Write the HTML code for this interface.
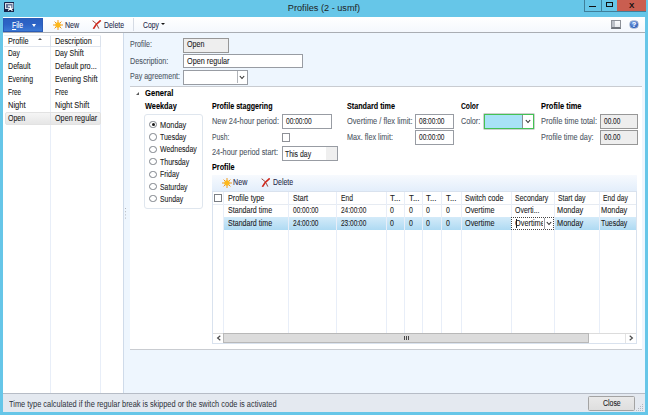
<!DOCTYPE html>
<html><head><meta charset="utf-8"><title>Profiles (2 - usmf)</title>
<style>
html,body{margin:0;padding:0;}
body{width:648px;height:415px;overflow:hidden;background:#66c6e8;font-family:"Liberation Sans",sans-serif;font-size:8.4px;color:#1a1a22;position:relative;}
div,span{box-sizing:border-box;}
.a{position:absolute;}
.t{position:absolute;white-space:nowrap;line-height:10px;height:10px;transform-origin:0 50%;-webkit-text-stroke:0.08px;}
.l{color:#4d5664;}
.tb{color:#1f2a4a;}
.b{font-weight:bold;color:#000;}
.f{position:absolute;background:#fff;border:1px solid #989ca3;}
.ro{background:#eeeeee;border-color:#979797;}
.vl{position:absolute;width:1px;background:#e8eef8;}
.rad{position:absolute;width:7.4px;height:7.4px;border:1px solid #7d8289;border-radius:50%;background:#fff;left:149.4px;}
</style></head><body>
<!-- title bar -->
<svg class="a" style="left:4px;top:2px" width="10.4" height="10.4" viewBox="0 0 10.4 10.4"><rect x="0" y="0" width="10.4" height="10.4" rx="0.8" fill="#16244a"/><rect x="1.5" y="1.6" width="7.4" height="4.8" fill="#5f6f95" stroke="#eef2fa" stroke-width="0.9"/><path d="M4 4.2h2.6v2.2l1.8 2.6M6.4 6.4L4.2 8.6" stroke="#ffffff" stroke-width="1.3" fill="none"/></svg>
<div class="a" style="left:0;width:648px;top:2px;height:11px;line-height:11px;text-align:center;font-size:9.6px;color:#1e1e1e;transform:scaleX(.955);white-space:nowrap;">Profiles (2 - usmf)</div>
<div class="a" style="left:583.5px;top:0;width:62.5px;height:11.6px;border:1px solid #3f7f9a;border-top:none;border-right:none;background:#66c6e8;"></div>
<div class="a" style="left:601px;top:0;width:1px;height:11px;background:#3f7f9a;"></div>
<div class="a" style="left:617.2px;top:0;width:28.8px;height:11.2px;background:#c95e50;"></div>
<div class="a" style="left:589.2px;top:5.6px;width:6.8px;height:1.8px;background:#111;"></div>
<div class="a" style="left:606.4px;top:2.3px;width:7px;height:5.2px;border:1.2px solid #111;border-top-width:1.8px;"></div>
<div class="a" style="left:617.2px;width:28.8px;top:0.5px;height:10px;line-height:10px;text-align:center;font-weight:bold;font-size:8px;color:#111;">X</div>

<!-- toolbar -->
<div class="a" style="left:3px;top:17px;width:642px;height:15px;background:linear-gradient(#ffffff,#f4f8fd);"></div>
<div class="a" style="left:3px;top:32px;width:642px;height:1px;background:#a9adb3;"></div>
<div class="a" style="left:3px;top:18px;width:40px;height:14px;background:linear-gradient(#2a5fc0,#2c63c6 45%,#3c79d6);border:1px solid #2a5cb8;"></div>
<div class="a" style="left:32px;top:24px;width:0;height:0;border-left:2.5px solid transparent;border-right:2.5px solid transparent;border-top:3px solid #fff;"></div>
<svg class="a" style="left:52.6px;top:19.5px" width="10" height="10" viewBox="0 0 10 10"><g stroke="#f09a1c" stroke-width="1"><path d="M5 0v10M0 5h10M1.6 1.6l6.8 6.8M8.4 1.6l-6.8 6.8"/></g><circle cx="5" cy="5" r="2.7" fill="#fdb81a"/></svg>
<svg class="a" style="left:92.4px;top:20px" width="9.2" height="9.2" viewBox="0 0 9.2 9.2"><path d="M0.6 0.8C3.2 2 5.4 5 6.8 8.6" stroke="#8a2a1e" stroke-width="0.9" fill="none"/><path d="M8.8 0.4C6 2.4 3 5.6 1.4 8.8" stroke="#d0281c" stroke-width="1.7" fill="none"/></svg>
<div class="a" style="left:133px;top:18px;width:1px;height:13px;background:#d5dbe4;"></div>
<div class="a" style="left:160.6px;top:23.2px;width:0;height:0;border-left:2.2px solid transparent;border-right:2.2px solid transparent;border-top:2.4px solid #151515;"></div>
<!-- right toolbar icons -->
<div class="a" style="left:611.3px;top:20px;width:10px;height:8.8px;border:1px solid #8d9198;background:linear-gradient(#fafbfc,#e9ebee);border-bottom:2px solid #70747b;"></div>
<div class="a" style="left:612.3px;top:21px;width:2.4px;height:5.8px;background:#bcc0c7;"></div>
<div class="a" style="left:629px;top:19.7px;width:9.8px;height:9.8px;border-radius:50%;background:radial-gradient(circle at 45% 30%,#8db4ee,#2f62be 70%,#274f9e);border:1px solid #a9b9d4;"></div>
<div class="a" style="left:629px;width:9.8px;top:19.7px;height:9.8px;line-height:9.8px;text-align:center;color:#fff;font-weight:bold;font-size:7.4px;">?</div>

<!-- content background -->
<div class="a" style="left:3px;top:33px;width:642px;height:360px;background:#eef6fe;"></div>

<!-- left list -->
<div class="a" style="left:3px;top:33px;width:120.5px;height:360px;background:#fff;border-right:1px solid #cfdbea;"></div>
<div class="a" style="left:4px;top:46px;width:96px;height:1px;background:#e1e6ee;"></div>
<div class="vl" style="left:50px;top:35px;height:358px;"></div>
<div class="vl" style="left:100px;top:35px;height:358px;"></div>
<div class="a" style="left:4.5px;top:112px;width:96px;height:12.6px;background:linear-gradient(#f5f5f5,#e6e6e6);border:1px solid #e2e2e2;border-radius:2px;"></div>
<div class="a" style="left:50px;top:113px;width:1px;height:11px;background:#dfe3ea;"></div>
<div class="a" style="left:38.2px;top:38.4px;width:0;height:0;border-left:2.4px solid transparent;border-right:2.4px solid transparent;border-bottom:2.7px solid #555;"></div>
<div class="a" style="left:50px;top:35.5px;width:1px;height:11px;background:#dbe2ec;"></div>
<div class="a" style="left:100px;top:35.5px;width:1px;height:11px;background:#dbe2ec;"></div>
<div class="a" style="left:4px;top:35px;width:97px;height:1px;background:#eef1f5;"></div>

<!-- header fields -->
<div class="f ro" style="left:183px;top:37.5px;width:46px;height:15px;"></div>
<div class="f" style="left:183px;top:53.7px;width:120px;height:14.5px;"></div>
<div class="f" style="left:183px;top:70px;width:65px;height:14.6px;"></div>
<div class="a" style="left:236.7px;top:71.3px;width:1px;height:12px;background:#b2b5ba;"></div>
<svg class="a" style="left:239px;top:75px" width="6" height="5" viewBox="0 0 6 5"><path d="M0.8 1L3 3.5L5.2 1" stroke="#2e2e2e" stroke-width="1.1" fill="none"/></svg>

<!-- General panel -->
<div class="a" style="left:130px;top:86px;width:512px;height:264px;background:#fff;border-top:1px solid #c9ccd1;border-bottom:1px solid #c9ccd1;"></div>
<div class="a" style="left:136.3px;top:92.4px;width:0;height:0;border-left:3.3px solid transparent;border-bottom:3.3px solid #5a5a5a;"></div>

<!-- weekday group -->
<div class="a" style="left:144px;top:114px;width:59px;height:94.5px;border:1px solid #dfe6ee;border-radius:3px;"></div>
<div class="rad" style="top:121px;"></div><div class="a" style="left:151.5px;top:123.1px;width:3.3px;height:3.3px;border-radius:50%;background:#1a1a1a;"></div>
<div class="rad" style="top:133.2px;"></div>
<div class="rad" style="top:145.6px;"></div>
<div class="rad" style="top:158px;"></div>
<div class="rad" style="top:170.5px;"></div>
<div class="rad" style="top:182.6px;"></div>
<div class="rad" style="top:195px;"></div>

<!-- profile staggering -->
<div class="f" style="left:282px;top:114px;width:49.5px;height:14.5px;"></div>
<div class="a" style="left:282.2px;top:133.1px;width:7.7px;height:8.6px;border:1px solid #8e9197;background:#fff;"></div>
<div class="f" style="left:282.2px;top:145.5px;width:55.8px;height:15.2px;"></div>
<div class="a" style="left:326.3px;top:146.6px;width:10.6px;height:13px;background:#efefef;"></div>

<!-- standard time -->
<div class="f" style="left:415px;top:114px;width:39px;height:14.5px;"></div>
<div class="f" style="left:415px;top:130.2px;width:39px;height:14.6px;"></div>

<!-- color -->
<div class="a" style="left:483.6px;top:114.2px;width:50px;height:14.6px;border:1px solid #44c254;box-shadow:0 0 0 0.45px rgba(110,120,112,.75);background:#a8e2f6;"></div>
<div class="a" style="left:522.4px;top:115.2px;width:10.2px;height:12.6px;background:#fff;border-left:1px solid #8a8e94;"></div>
<svg class="a" style="left:524.8px;top:119.3px" width="6" height="5" viewBox="0 0 6 5"><path d="M0.8 1L3 3.5L5.2 1" stroke="#2e2e2e" stroke-width="1.1" fill="none"/></svg>

<!-- profile time -->
<div class="f ro" style="left:600px;top:114px;width:38px;height:14.5px;"></div>
<div class="f ro" style="left:600px;top:130.2px;width:38px;height:14.6px;"></div>

<!-- Profile grid -->
<div class="a" style="left:212px;top:175px;width:425px;height:16px;background:linear-gradient(#f7fafe,#e3eefb);"></div>
<svg class="a" style="left:221.8px;top:177.8px" width="10" height="10" viewBox="0 0 10 10"><g stroke="#f09a1c" stroke-width="1"><path d="M5 0v10M0 5h10M1.6 1.6l6.8 6.8M8.4 1.6l-6.8 6.8"/></g><circle cx="5" cy="5" r="2.7" fill="#fdb81a"/></svg>
<svg class="a" style="left:261px;top:178px" width="9.2" height="9.2" viewBox="0 0 9.2 9.2"><path d="M0.6 0.8C3.2 2 5.4 5 6.8 8.6" stroke="#8a2a1e" stroke-width="0.9" fill="none"/><path d="M8.8 0.4C6 2.4 3 5.6 1.4 8.8" stroke="#d0281c" stroke-width="1.7" fill="none"/></svg>

<div class="a" style="left:212px;top:191px;width:425px;height:153px;background:#fff;border:1px solid #d9e2ee;"></div>
<div class="a" style="left:213px;top:203.5px;width:423px;height:1px;background:#e6ebf2;"></div>
<div class="a" style="left:223.5px;top:217px;width:412.5px;height:12.5px;background:linear-gradient(#d4ebf9,#aedaf3);"></div>
<div class="vl" style="left:223px;top:192px;height:141px;"></div>
<div class="vl" style="left:288px;top:192px;height:141px;"></div>
<div class="vl" style="left:336px;top:192px;height:141px;"></div>
<div class="vl" style="left:386.2px;top:192px;height:141px;"></div>
<div class="vl" style="left:404px;top:192px;height:141px;"></div>
<div class="vl" style="left:422px;top:192px;height:141px;"></div>
<div class="vl" style="left:441px;top:192px;height:141px;"></div>
<div class="vl" style="left:460.6px;top:192px;height:141px;"></div>
<div class="vl" style="left:510.5px;top:192px;height:141px;"></div>
<div class="vl" style="left:554px;top:192px;height:141px;"></div>
<div class="vl" style="left:599px;top:192px;height:141px;"></div>
<div class="a" style="left:214px;top:194px;width:7.6px;height:7.6px;border:1px solid #7b7f85;background:#fff;"></div>
<!-- active cell -->
<div class="a" style="left:511px;top:217px;width:43px;height:12.5px;background:#fff;border:1px dotted #444;"></div>
<div class="a" style="left:515.6px;top:219px;width:0.8px;height:9px;background:#222;"></div>
<div class="a" style="left:544px;top:218px;width:1px;height:10.5px;background:#9a9ea6;"></div>
<svg class="a" style="left:546px;top:221px" width="6" height="5" viewBox="0 0 6 5"><path d="M0.8 1L3 3.5L5.2 1" stroke="#2e2e2e" stroke-width="1.1" fill="none"/></svg>
<!-- scrollbar -->
<div class="a" style="left:213px;top:333px;width:423px;height:10px;background:#fff;border-top:1px solid #dcdcdc;"></div>
<div class="a" style="left:223.2px;top:333.2px;width:365.4px;height:9.9px;background:#dcdcdc;border:1px solid #b8b8b8;"></div>
<svg class="a" style="left:216px;top:335.3px" width="6" height="6" viewBox="0 0 6 6"><path d="M4.3 0.8L1.6 3L4.3 5.2" stroke="#4a4a4a" stroke-width="1.15" fill="none"/></svg>
<svg class="a" style="left:627.5px;top:335.3px" width="6" height="6" viewBox="0 0 6 6"><path d="M1.7 0.8L4.4 3L1.7 5.2" stroke="#4a4a4a" stroke-width="1.15" fill="none"/></svg>
<div class="a" style="left:625px;top:334px;width:1px;height:9px;background:#e3e3e3;"></div>
<div class="a" style="left:406.2px;top:336.1px;width:1px;height:4.3px;background:#4a4a4a;box-shadow:2px 0 0 #4a4a4a,-2px 0 0 #4a4a4a;"></div>

<!-- splitter grip -->
<div class="a" style="left:124.5px;top:207.8px;width:1.4px;height:1.2px;background:#b3b7be;box-shadow:0 3.2px 0 #b3b7be,0 6.4px 0 #b3b7be,0 9.6px 0 #b3b7be;"></div>

<!-- status bar -->
<div class="a" style="left:3px;top:393px;width:642px;height:19px;background:#e4e9f0;border-top:1px solid #b6bcc6;"></div>
<div class="a" style="left:588.3px;top:396px;width:46.5px;height:14.7px;background:linear-gradient(#e9e9e9,#dedede);border:1px solid #a3a3a3;border-radius:1.5px;"></div>
<div class="a" style="left:642.3px;top:403.5px;width:1.2px;height:1.2px;background:#b4b9c2;box-shadow:0 2px 0 #b4b9c2,0 4px 0 #b4b9c2,0 6px 0 #b4b9c2,-2px 2px 0 #b4b9c2,-2px 4px 0 #b4b9c2,-2px 6px 0 #b4b9c2,-4px 4px 0 #b4b9c2,-4px 6px 0 #b4b9c2,-6px 6px 0 #b4b9c2;"></div>

<!-- text -->
<div class="t" style="left:12.4px;top:20.0px;transform:scaleX(0.815);color:#fff;"><u>F</u>ile</div>
<div class="t tb" style="left:64.9px;top:20.0px;transform:scaleX(0.847);">New</div>
<div class="t tb" style="left:103.9px;top:20.0px;transform:scaleX(0.826);">Delete</div>
<div class="t tb" style="left:142.9px;top:20.0px;transform:scaleX(0.808);">Copy</div>
<div class="t" style="left:7.9px;top:36.0px;transform:scaleX(0.867);">Profile</div>
<div class="t" style="left:54.7px;top:36.0px;transform:scaleX(0.878);">Description</div>
<div class="t" style="left:7.9px;top:48.0px;transform:scaleX(0.792);">Day</div>
<div class="t" style="left:54.7px;top:48.0px;transform:scaleX(0.842);">Day Shift</div>
<div class="t" style="left:7.9px;top:61.0px;transform:scaleX(0.851);">Default</div>
<div class="t" style="left:54.7px;top:61.0px;transform:scaleX(0.870);">Default pro...</div>
<div class="t" style="left:7.9px;top:74.0px;transform:scaleX(0.826);">Evening</div>
<div class="t" style="left:54.7px;top:74.0px;transform:scaleX(0.859);">Evening Shift</div>
<div class="t" style="left:7.9px;top:87.0px;transform:scaleX(0.766);">Free</div>
<div class="t" style="left:54.7px;top:87.0px;transform:scaleX(0.766);">Free</div>
<div class="t" style="left:7.9px;top:100.0px;transform:scaleX(0.900);">Night</div>
<div class="t" style="left:54.7px;top:100.0px;transform:scaleX(0.885);">Night Shift</div>
<div class="t" style="left:7.9px;top:113.0px;transform:scaleX(0.839);">Open</div>
<div class="t" style="left:54.7px;top:113.0px;transform:scaleX(0.863);">Open regular</div>
<div class="t l" style="left:129.9px;top:39.0px;transform:scaleX(0.844);">Profile:</div>
<div class="t l" style="left:129.9px;top:56.0px;transform:scaleX(0.866);">Description:</div>
<div class="t l" style="left:129.9px;top:71.0px;transform:scaleX(0.846);">Pay agreement:</div>
<div class="t" style="left:186.7px;top:39.0px;transform:scaleX(0.854);">Open</div>
<div class="t" style="left:186.7px;top:56.0px;transform:scaleX(0.869);">Open regular</div>
<div class="t b" style="left:144.9px;top:88.0px;transform:scaleX(0.907);">General</div>
<div class="t b" style="left:144.9px;top:101.0px;transform:scaleX(0.879);">Weekday</div>
<div class="t b" style="left:211.9px;top:101.0px;transform:scaleX(0.850);">Profile staggering</div>
<div class="t b" style="left:346.7px;top:101.0px;transform:scaleX(0.859);">Standard time</div>
<div class="t b" style="left:461.2px;top:101.0px;transform:scaleX(0.800);">Color</div>
<div class="t b" style="left:541.1px;top:101.0px;transform:scaleX(0.888);">Profile time</div>
<div class="t" style="left:159.9px;top:120.0px;transform:scaleX(0.883);">Monday</div>
<div class="t" style="left:159.9px;top:132.0px;transform:scaleX(0.827);">Tuesday</div>
<div class="t" style="left:159.9px;top:144.0px;transform:scaleX(0.835);">Wednesday</div>
<div class="t" style="left:159.9px;top:157.0px;transform:scaleX(0.839);">Thursday</div>
<div class="t" style="left:159.9px;top:169.0px;transform:scaleX(0.829);">Friday</div>
<div class="t" style="left:159.9px;top:182.0px;transform:scaleX(0.820);">Saturday</div>
<div class="t" style="left:159.9px;top:194.0px;transform:scaleX(0.820);">Sunday</div>
<div class="t l" style="left:211.9px;top:116.0px;transform:scaleX(0.883);">New 24-hour period:</div>
<div class="t l" style="left:211.9px;top:132.0px;transform:scaleX(0.808);">Push:</div>
<div class="t l" style="left:211.9px;top:147.0px;transform:scaleX(0.875);">24-hour period start:</div>
<div class="t" style="left:285.7px;top:116.0px;transform:scaleX(0.788);">00:00:00</div>
<div class="t" style="left:285.1px;top:149.0px;transform:scaleX(0.824);">This day</div>
<div class="t l" style="left:346.7px;top:116.0px;transform:scaleX(0.891);">Overtime / flex limit:</div>
<div class="t l" style="left:346.7px;top:132.0px;transform:scaleX(0.867);">Max. flex limit:</div>
<div class="t" style="left:419.4px;top:116.0px;transform:scaleX(0.782);">08:00:00</div>
<div class="t" style="left:419.4px;top:132.0px;transform:scaleX(0.782);">00:00:00</div>
<div class="t l" style="left:461.2px;top:116.0px;transform:scaleX(0.859);">Color:</div>
<div class="t l" style="left:541.1px;top:116.0px;transform:scaleX(0.899);">Profile time total:</div>
<div class="t l" style="left:541.1px;top:132.0px;transform:scaleX(0.876);">Profile time day:</div>
<div class="t" style="left:603.6px;top:116.0px;transform:scaleX(0.782);">00.00</div>
<div class="t" style="left:603.6px;top:132.0px;transform:scaleX(0.782);">00.00</div>
<div class="t b" style="left:211.9px;top:162.0px;transform:scaleX(0.863);">Profile</div>
<div class="t tb" style="left:232.9px;top:177.0px;transform:scaleX(0.853);">New</div>
<div class="t tb" style="left:272.9px;top:177.0px;transform:scaleX(0.834);">Delete</div>
<div class="t" style="left:228.1px;top:193.0px;transform:scaleX(0.869);">Profile type</div>
<div class="t" style="left:292.9px;top:193.0px;transform:scaleX(0.848);">Start</div>
<div class="t" style="left:340.9px;top:193.0px;transform:scaleX(0.805);">End</div>
<div class="t" style="left:390.2px;top:193.0px;transform:scaleX(0.940);">T...</div>
<div class="t" style="left:408.8px;top:193.0px;transform:scaleX(0.940);">T...</div>
<div class="t" style="left:426.4px;top:193.0px;transform:scaleX(0.940);">T...</div>
<div class="t" style="left:445.9px;top:193.0px;transform:scaleX(0.940);">T...</div>
<div class="t" style="left:465.0px;top:193.0px;transform:scaleX(0.853);">Switch code</div>
<div class="t" style="left:515.2px;top:193.0px;transform:scaleX(0.829);">Secondary</div>
<div class="t" style="left:558.4px;top:193.0px;transform:scaleX(0.820);">Start day</div>
<div class="t" style="left:603.4px;top:193.0px;transform:scaleX(0.813);">End day</div>
<div class="t" style="left:228.1px;top:205.0px;transform:scaleX(0.848);">Standard time</div>
<div class="t" style="left:292.9px;top:205.0px;transform:scaleX(0.782);">00:00:00</div>
<div class="t" style="left:340.9px;top:205.0px;transform:scaleX(0.776);">24:00:00</div>
<div class="t" style="left:390.2px;top:205.0px;transform:scaleX(0.835);">0</div>
<div class="t" style="left:408.8px;top:205.0px;transform:scaleX(0.835);">0</div>
<div class="t" style="left:426.4px;top:205.0px;transform:scaleX(0.835);">0</div>
<div class="t" style="left:445.9px;top:205.0px;transform:scaleX(0.835);">0</div>
<div class="t" style="left:465.0px;top:205.0px;transform:scaleX(0.868);">Overtime</div>
<div class="t" style="left:556.7px;top:205.0px;transform:scaleX(0.879);">Monday</div>
<div class="t" style="left:601.4px;top:205.0px;transform:scaleX(0.883);">Monday</div>
<div class="t" style="left:228.1px;top:218.0px;transform:scaleX(0.848);">Standard time</div>
<div class="t" style="left:292.9px;top:218.0px;transform:scaleX(0.782);">24:00:00</div>
<div class="t" style="left:340.9px;top:218.0px;transform:scaleX(0.776);">23:00:00</div>
<div class="t" style="left:390.2px;top:218.0px;transform:scaleX(0.835);">0</div>
<div class="t" style="left:408.8px;top:218.0px;transform:scaleX(0.835);">0</div>
<div class="t" style="left:426.4px;top:218.0px;transform:scaleX(0.835);">0</div>
<div class="t" style="left:445.9px;top:218.0px;transform:scaleX(0.835);">0</div>
<div class="t" style="left:465.0px;top:218.0px;transform:scaleX(0.868);">Overtime</div>
<div class="t" style="left:556.7px;top:218.0px;transform:scaleX(0.879);">Monday</div>
<div class="t" style="left:601.4px;top:218.0px;transform:scaleX(0.827);">Tuesday</div>
<div class="t" style="left:515.2px;top:205.0px;transform:scaleX(0.835);">Overti...</div>
<div class="t" style="left:515.3px;top:218.0px;transform:scaleX(0.877);width:31.7px;overflow:hidden;">Overtime</div>
<div class="t" style="left:8.9px;top:399.0px;transform:scaleX(0.885);color:#2b3038;-webkit-text-stroke:0;">Time type calculated if the regular break is skipped or the switch code is activated</div>
<div class="t" style="left:602.8px;top:398.0px;transform:scaleX(0.826);">Close</div>
</body></html>
